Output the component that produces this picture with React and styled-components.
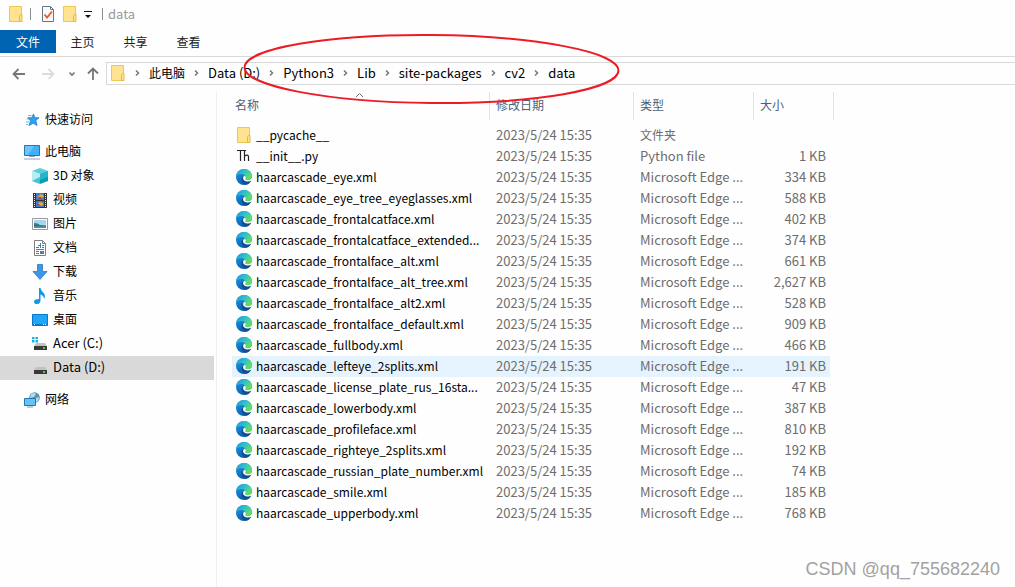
import styled, { createGlobalStyle } from 'styled-components';

const GlobalStyle = createGlobalStyle`
  * { box-sizing: border-box; }

  body {
    margin: 0;
    background: #fefefe;
    color: #000;
    font-family: "Noto Sans CJK SC", "Noto Sans", sans-serif;
    font-size: 12px;
    line-height: 18px;
  }

  svg { display: block; flex: none; }
  button { font: inherit; }
`;

const Window = styled.div`
  position: relative;
  display: flex;
  flex-direction: column;
  min-height: 100vh;
  overflow: hidden;
`;

const TitleBar = styled.header`
  display: flex;
  align-items: center;
  height: 30px;
  padding: 0 0 2px 8px;
`;

const ToolButton = styled.button`
  display: flex;
  align-items: center;
  justify-content: center;
  width: ${props => props.$width || 24}px;
  height: 24px;
  padding: 0;
  border: 0;
  background: none;
`;

const Divider = styled.span`
  width: 1px;
  height: 12px;
  margin: 0 5px 0 6px;
  background: #8c8c8c;
`;

const Title = styled.h1`
  margin: 0;
  font-size: 13px;
  font-weight: normal;
  color: #999;
`;

const Ribbon = styled.nav`
  display: flex;
  height: 27px;
  border-bottom: 1px solid #d9d9d9;
`;

const Tab = styled.button`
  width: ${props => (props.$file ? 56 : 53)}px;
  height: 23px;
  padding: 0;
  border: 0;
  background: ${props => (props.$file ? '#0063b1' : 'none')};
  color: ${props => (props.$file ? '#fff' : '#222')};
`;

const AddressRow = styled.div`
  display: flex;
  height: 35px;
  padding: 5px 0 7px 7px;
`;

const AddressBox = styled.nav`
  display: flex;
  align-items: center;
  flex: 1;
  padding: 0 0 2px 3px;
  border: 1px solid #d9d9d9;
  border-right: 0;
`;

const Crumb = styled.a`
  color: #000;
  font-size: ${props => (props.$cjk ? 12 : 13)}px;
  text-decoration: none;
  white-space: nowrap;
`;

const Body = styled.div`
  display: flex;
  flex: 1;
`;

const Sidebar = styled.nav`
  display: flex;
  flex-direction: column;
  gap: 8px;
  width: 217px;
  padding: 16px 2px 0 0;
  border-right: 1px solid #f0f0f0;
`;

const Tree = styled.ul`
  margin: 0;
  padding: 0;
  list-style: none;
`;

const TreeLink = styled.a`
  display: flex;
  align-items: center;
  gap: 5px;
  height: 24px;
  padding-left: ${props => (props.$nested ? 32 : 24)}px;
  background: ${props => (props.$selected ? '#d9d9d9' : 'none')};
  color: #000;
  font-size: ${props => (props.$latin ? 13 : 12)}px;
  text-decoration: none;

  span { padding-bottom: 2px; }
`;

const Files = styled.main`
  flex: 1;
  padding-left: 15px;
`;

const Table = styled.table`
  width: 602px;
  table-layout: fixed;
  border-collapse: separate;
  border-spacing: 0;
`;

const HeadCell = styled.th`
  position: relative;
  width: ${props => props.$width}px;
  height: 28px;
  padding: 0 0 2px ${props => (props.$first ? 3 : 6)}px;
  border-right: 1px solid #e3e3e3;
  color: #4c607a;
  font-weight: normal;
  text-align: left;
`;

const SortMark = styled.svg`
  position: absolute;
  top: 0;
  left: 123px;
`;

const Spacer = styled.tbody`
  td { height: 5px; padding: 0; }
`;

const Row = styled.tr`
  td { background-color: ${props => (props.$hover ? '#e5f3ff' : 'transparent')}; }
`;

const Cell = styled.td`
  height: 21px;
  padding: 0 0 2px 6px;
  color: #6d6d6d;
  font-size: ${props => (props.$cjk ? 12 : 13)}px;
  white-space: nowrap;
`;

const SizeCell = styled(Cell)`
  padding: 0 4px 2px 0;
  border-right: 4px solid transparent;
  background-clip: padding-box;
  text-align: right;
`;

const NameCell = styled(Cell)`
  padding-left: 4px;
  color: #000;
  font-size: 12px;
`;

const FileName = styled.span`
  display: flex;
  align-items: center;
  gap: 4px;
`;

const Mark = styled.svg`
  position: absolute;
  top: 30px;
  left: 240px;
  pointer-events: none;
`;

const Watermark = styled.div`
  position: absolute;
  right: 15px;
  bottom: 9px;
  color: #a2a2a2;
  font-family: "Liberation Sans", sans-serif;
  font-size: 18px;
`;

const FolderIcon = () => (
  <svg width="16" height="16" viewBox="0 0 16 16">
    <path d="M1.5.5h12v15h-12z" fill="#ffe391" stroke="#edc84f" />
    <path d="M11.5 15.5V10l1-1.500h1.500v7z" fill="#ffe391" stroke="#e5b93b" />
  </svg>
);

const CheckPageIcon = () => (
  <svg width="16" height="16" viewBox="0 0 16 16">
    <path d="M2.500.5h8l3 3v12h-11z" fill="#f7f9fc" stroke="#6d7680" />
    <path d="M10.500.5v3h3" fill="none" stroke="#6d7680" />
    <path d="m4.500 8.500 2.500 3 5-6" fill="none" stroke="#e85b25" strokeWidth="1.800" />
  </svg>
);

const MenuIcon = () => (
  <svg width="8" height="8" viewBox="0 0 8 8">
    <path d="M0 1h8v1H0zM1 5h6L4 8z" fill="#111" />
  </svg>
);

const ArrowIcon = ({ direction, color = '#777' }) => (
  <svg width="14" height="14" viewBox="0 0 14 14">
    <path
      d="M13 7H1.500M6.500 2l-5 5 5 5"
      fill="none"
      stroke={color}
      strokeWidth="1.800"
      transform={`rotate(${{ left: 0, up: 90, right: 180 }[direction]} 7 7)`}
    />
  </svg>
);

const DownIcon = () => (
  <svg width="8" height="8" viewBox="0 0 8 8">
    <path d="m1.500 2.500 2.500 2.500 2.500-2.500" fill="none" stroke="#777" strokeWidth="1.600" />
  </svg>
);

const Chevron = () => (
  <svg width="23" height="8" viewBox="0 0 23 8">
    <path d="m10 1.500 2.500 2.500L10 6.500" fill="none" stroke="#777" strokeWidth="1.500" />
  </svg>
);

const StarIcon = () => (
  <svg width="16" height="16" viewBox="0 0 16 16">
    <path d="m9.500 2 1.300 3.700H15l-3.200 2.800 1.200 5-3.800-2.300L5 13.500l1.500-4.700L3.800 5.700h4z" fill="#2ba3ee" stroke="#1b7cc4" strokeWidth=".8" />
    <path d="M4 3.500h3.500M2.500 7h2.500M2 10h3M2 12.500h2" stroke="#69b9ec" />
  </svg>
);

const PcIcon = () => (
  <svg width="16" height="16" viewBox="0 0 16 16">
    <path d="M.5 1.500h15v10H.5z" fill="#3fb0fb" stroke="#2578af" />
    <path d="M1 2h9L4 11H1z" fill="#6cc6fd" />
    <path d="M5 12.500h6M0 15h16" stroke="#91a4b5" />
  </svg>
);

const CubeIcon = () => (
  <svg width="16" height="16" viewBox="0 0 16 16">
    <path d="m8 0 8 3-8 3-8-3z" fill="#57cfda" />
    <path d="m0 3 8 3v10l-8-3z" fill="#b8edef" />
    <path d="m16 3-8 3v10l8-3z" fill="#079bb5" />
    <path d="m0 13 8-4v7z" fill="#45c2ce" />
    <path d="m8 6 8-3v6l-8 3z" fill="#24b5cd" />
  </svg>
);

const VideoIcon = () => (
  <svg width="16" height="16" viewBox="0 0 16 16">
    <path d="M1 1h14v15H1z" fill="#333" />
    <path d="M4 1h8v7H4zM4 9h8v6H4z" fill="#4677d4" />
    <path d="m5 5 2-1 1-2 3 1 1 2-3 1zM6 11l2-1 3 1v2l-2 1z" fill="#d9b52d" />
    <path d="M7 5h2v2H7zM5 12h2v1H5z" fill="#b23a33" />
    <path d="M2.500 2v14M13.500 2v14" stroke="#eee" strokeDasharray="1 1" />
  </svg>
);

const PictureIcon = () => (
  <svg width="16" height="16" viewBox="0 0 16 16">
    <path d="M.5 2.500h15v11H.5z" fill="#fff" stroke="#999" />
    <path d="M2 4h12v8H2z" fill="#a8d4f4" />
    <path d="M2 7q4 0 6 2l6 .5V12H2z" fill="#3d7477" />
    <path d="M2 10.500h12V12H2z" fill="#4a91bd" />
  </svg>
);

const DocumentIcon = () => (
  <svg width="16" height="16" viewBox="0 0 16 16">
    <path d="M2.500.5h8l3 3v12h-11z" fill="#fff" stroke="#808080" />
    <path d="M10.500.5v3h3" fill="none" stroke="#808080" />
    <path d="M4 7.500h3M6 5.500h2M8.500 3v5M10 5.500h2M10 7.500h2M4 9.500h8M4 11.500h3M4 13.500h3" fill="none" stroke="#2587c9" />
    <path d="M8 11h4v3H8z" fill="#587f9a" />
  </svg>
);

const DownloadIcon = () => (
  <svg width="16" height="16" viewBox="0 0 16 16">
    <path d="M5.500.5h5v7h4.500L8 15.500 1 7.500h4.500z" fill="#3d96e5" stroke="#2879c2" strokeWidth=".8" />
  </svg>
);

const MusicIcon = () => (
  <svg width="16" height="16" viewBox="0 0 16 16">
    <path d="M7 0h1.500q.3 2.500 2.700 4.500 3 3 .8 6.500.2-3-3.500-4.500V12q0 4-3.500 4-3 0-3-2.300Q2.200 11 7 11z" fill="#0c99ee" />
  </svg>
);

const DesktopIcon = () => (
  <svg width="16" height="16" viewBox="0 0 16 16">
    <path d="M.5 2.500h15v11H.5z" fill="#22a5f9" stroke="#0879c6" />
    <path d="M1 12.500h14" stroke="#0879c6" />
    <path d="M2 12.500h1M11 12.500h1M13 12.500h1" stroke="#fff" />
  </svg>
);

const DriveIcon = ({ system }) => (
  <svg width="16" height="16" viewBox="0 0 16 16">
    {system && <path d="M0 1h2.500v2H0zM3.500 1H6v2H3.500zM0 4h2.500v2.500H0zM3.500 4H6v2.500H3.500z" fill="#13b2ee" />}
    <path d="M4 7h9l2 3H2z" fill="#c2c2c2" />
    <path d="M2 10h13v4H2z" fill="#393939" />
    <path d="M11 12h2" stroke="#55ef52" strokeWidth="1.500" />
  </svg>
);

const NetworkIcon = () => (
  <svg width="16" height="16" viewBox="0 0 16 16">
    <circle cx="10.500" cy="5.500" r="5.300" fill="#5793b5" />
    <path d="M7 2q3-2 5 0l-2 3-4 1zM12 6l3-1-1 4-2 1z" fill="#b5dbe8" />
    <path d="M.5 6.500h11v7H.5z" fill="#62c3fb" stroke="#2478ad" />
    <path d="M3 15h6" stroke="#8798a5" />
  </svg>
);

const PythonFileIcon = () => (
  <svg width="16" height="16" viewBox="0 0 16 16">
    <path d="M1 2.500h9M4.500 2.500V13M8.500 2.500V13M8.500 8q3.500-2 4 .5V13" fill="none" stroke="#222" strokeWidth="1.200" />
  </svg>
);

const EdgeIcon = () => (
  <svg width="16" height="16" viewBox="0 0 16 16">
    <use href="#edge-logo" />
  </svg>
);

const HiddenDefs = styled.svg`
  position: absolute;
`;

const EdgeSymbol = () => (
  <HiddenDefs width="0" height="0">
    <defs>
      <linearGradient id="edge-top" x1="0" y1="0" x2="1" y2=".6">
        <stop offset="0" stopColor="#1f93d8" />
        <stop offset=".5" stopColor="#2fc0cc" />
        <stop offset="1" stopColor="#6be05a" />
      </linearGradient>
      <linearGradient id="edge-side" x1="0" y1="0" x2=".4" y2="1">
        <stop offset="0" stopColor="#1d9fe4" />
        <stop offset="1" stopColor="#0a5fb4" />
      </linearGradient>
      <g id="edge-logo">
        <circle cx="8" cy="8" r="8" fill="url(#edge-side)" />
        <path d="M.1 7C.7 3 4 0 8 0c5 0 8 3.500 8 7 0 3-2 4.500-4.500 4.500-2 0-3-.8-2.300-1.800C10.300 7 8 5 5.500 5 3 5 .8 6 .1 7z" fill="url(#edge-top)" />
        <path d="M6 8.200c-1.500 3.300.5 6.800 4.200 7.500 2-.5 3.900-1.900 4.900-3.800-3 1-7.500.8-7.800-3.500z" fill="#124d91" />
        <path d="M8.600 6.700c-2 1-2 3.600-.3 4.900 2 1.400 5 1.300 7.700-.4V9c-1 1.500-2.800 2.300-4.600 2-1.400-.2-2.300-.8-1.900-1.500.7-1 .3-2.300-.9-2.800z" fill="#fefefe" />
        <path d="M16 7c0 2.500-1.800 4.200-4.500 4.200-1.500 0-2.400-.6-2.200-1.200L12 8z" fill="#62d95f" />
      </g>
    </defs>
  </HiddenDefs>
);

const crumbs = ['此电脑', 'Data (D:)', 'Python3', 'Lib', 'site-packages', 'cv2', 'data'];

const groups = [
  [{ name: '快速访问', icon: <StarIcon /> }],
  [
    { name: '此电脑', icon: <PcIcon /> },
    { name: '3D 对象', icon: <CubeIcon />, nested: true },
    { name: '视频', icon: <VideoIcon />, nested: true },
    { name: '图片', icon: <PictureIcon />, nested: true },
    { name: '文档', icon: <DocumentIcon />, nested: true },
    { name: '下载', icon: <DownloadIcon />, nested: true },
    { name: '音乐', icon: <MusicIcon />, nested: true },
    { name: '桌面', icon: <DesktopIcon />, nested: true },
    { name: 'Acer (C:)', icon: <DriveIcon system />, nested: true, latin: true },
    { name: 'Data (D:)', icon: <DriveIcon />, nested: true, latin: true, selected: true },
  ],
  [{ name: '网络', icon: <NetworkIcon /> }],
];

const xmlFiles = [
  ['haarcascade_eye.xml', '334 KB'],
  ['haarcascade_eye_tree_eyeglasses.xml', '588 KB'],
  ['haarcascade_frontalcatface.xml', '402 KB'],
  ['haarcascade_frontalcatface_extended...', '374 KB'],
  ['haarcascade_frontalface_alt.xml', '661 KB'],
  ['haarcascade_frontalface_alt_tree.xml', '2,627 KB'],
  ['haarcascade_frontalface_alt2.xml', '528 KB'],
  ['haarcascade_frontalface_default.xml', '909 KB'],
  ['haarcascade_fullbody.xml', '466 KB'],
  ['haarcascade_lefteye_2splits.xml', '191 KB'],
  ['haarcascade_license_plate_rus_16sta...', '47 KB'],
  ['haarcascade_lowerbody.xml', '387 KB'],
  ['haarcascade_profileface.xml', '810 KB'],
  ['haarcascade_righteye_2splits.xml', '192 KB'],
  ['haarcascade_russian_plate_number.xml', '74 KB'],
  ['haarcascade_smile.xml', '185 KB'],
  ['haarcascade_upperbody.xml', '768 KB'],
];

const files = [
  { name: '__pycache__', type: '文件夹', size: '', icon: <FolderIcon /> },
  { name: '__init__.py', type: 'Python file', size: '1 KB', icon: <PythonFileIcon /> },
  ...xmlFiles.map(([name, size]) => ({ name, size, type: 'Microsoft Edge ...', icon: <EdgeIcon /> })),
];

const hovered = 'haarcascade_lefteye_2splits.xml';

export default function App() {
  return (
    <Window>
      <GlobalStyle />
      <EdgeSymbol />
      <TitleBar>
        <FolderIcon />
        <Divider />
        <ToolButton aria-label="Properties"><CheckPageIcon /></ToolButton>
        <ToolButton $width={20} aria-label="New folder"><FolderIcon /></ToolButton>
        <ToolButton $width={16} aria-label="Customize toolbar"><MenuIcon /></ToolButton>
        <Divider />
        <Title>data</Title>
      </TitleBar>

      <Ribbon>
        <Tab $file>文件</Tab>
        <Tab>主页</Tab>
        <Tab>共享</Tab>
        <Tab>查看</Tab>
      </Ribbon>

      <AddressRow>
        <ToolButton aria-label="Back"><ArrowIcon direction="left" /></ToolButton>
        <ToolButton $width={34} aria-label="Forward"><ArrowIcon direction="right" color="#dcdcdc" /></ToolButton>
        <ToolButton $width={14} aria-label="Recent locations"><DownIcon /></ToolButton>
        <ToolButton $width={27} aria-label="Up"><ArrowIcon direction="up" /></ToolButton>
        <AddressBox>
          <FolderIcon />
          {crumbs.map((crumb, i) => [
            <Chevron key={`sep-${i}`} />,
            <Crumb key={crumb} href="#" $cjk={i === 0}>{crumb}</Crumb>,
          ])}
        </AddressBox>
      </AddressRow>

      <Body>
        <Sidebar>
          {groups.map((items, i) => (
            <Tree key={i}>
              {items.map((item) => (
                <li key={item.name}>
                  <TreeLink href="#" $nested={item.nested} $latin={item.latin} $selected={item.selected}>
                    {item.icon}
                    <span>{item.name}</span>
                  </TreeLink>
                </li>
              ))}
            </Tree>
          ))}
        </Sidebar>

        <Files>
          <Table>
            <thead>
              <tr>
                <HeadCell $width={258} $first>
                  名称
                  <SortMark width="9" height="6" viewBox="0 0 9 6">
                    <path d="m1 5 3.500-3.500L8 5" fill="none" stroke="#777" />
                  </SortMark>
                </HeadCell>
                <HeadCell $width={144}>修改日期</HeadCell>
                <HeadCell $width={120}>类型</HeadCell>
                <HeadCell $width={80}>大小</HeadCell>
              </tr>
            </thead>
            <Spacer><tr><td colSpan={4} /></tr></Spacer>
            <tbody>
              {files.map((file) => (
                <Row key={file.name} $hover={file.name === hovered}>
                  <NameCell>
                    <FileName>{file.icon}{file.name}</FileName>
                  </NameCell>
                  <Cell>2023/5/24 15:35</Cell>
                  <Cell $cjk={file.type === '文件夹'}>{file.type}</Cell>
                  <SizeCell>{file.size}</SizeCell>
                </Row>
              ))}
            </tbody>
          </Table>
        </Files>
      </Body>

      <Mark width="384" height="80" viewBox="0 0 384 80">
        <ellipse cx="191.500" cy="39" rx="187" ry="34" fill="none" stroke="#ed1c24" strokeWidth="2" transform="rotate(.5 191.500 39)" />
      </Mark>
      <Watermark>CSDN @qq_755682240</Watermark>
    </Window>
  );
}
